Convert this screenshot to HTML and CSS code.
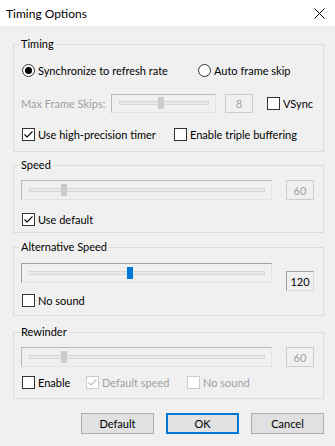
FILE: index.html
```html
<!DOCTYPE html>
<html lang="en">
<head>
  <meta charset="UTF-8" />
  <title>Timing Options</title>
  <link rel="stylesheet" href="styles.css">
</head>
<body>
  <div class="window">
    <div class="titlebar">
      <span class="title">Timing Options</span>
      <svg class="close" width="11" height="11" viewBox="0 0 11 11"><path d="M0.5 0.5L10.5 10.5M10.5 0.5L0.5 10.5" stroke="#000" stroke-width="1"/></svg>
    </div>

    <div class="content">
      <fieldset class="group group-timing">
        <legend>Timing</legend>
        <div class="row row-check">
          <label class="opt opt-sync"><span class="radio checked"></span>Synchronize to refresh rate</label>
          <label class="opt"><span class="radio"></span>Auto frame skip</label>
        </div>
        <div class="row row-skips">
          <span class="skip-label muted">Max Frame Skips:</span>
          <div class="slider slider-skips disabled"><span class="track"></span><span class="thumb" style="left: 46px"></span></div>
          <span class="num num-skips disabled">8</span>
          <label class="opt opt-vsync"><span class="check"></span>VSync</label>
        </div>
        <div class="row row-check row-timer">
          <label class="opt opt-timer"><span class="check checked"><svg viewBox="0 0 11 11"><path d="M1.5 5.5L4 8L9.5 2.5" /></svg></span>Use high-precision timer</label>
          <label class="opt"><span class="check"></span>Enable triple buffering</label>
        </div>
      </fieldset>

      <fieldset class="group group-speed">
        <legend>Speed</legend>
        <div class="row row-slider">
          <div class="slider disabled"><span class="track"></span><span class="thumb" style="left: 39px"></span></div>
          <span class="num disabled">60</span>
        </div>
        <div class="row row-check row-default">
          <label class="opt"><span class="check checked"><svg viewBox="0 0 11 11"><path d="M1.5 5.5L4 8L9.5 2.5" /></svg></span>Use default</label>
        </div>
      </fieldset>

      <fieldset class="group group-alt">
        <legend>Alternative Speed</legend>
        <div class="row row-slider row-alt">
          <div class="slider"><span class="track"></span><span class="thumb" style="left: 105px"></span></div>
          <span class="num">120</span>
        </div>
        <div class="row row-check row-nosound">
          <label class="opt"><span class="check"></span>No sound</label>
        </div>
      </fieldset>

      <fieldset class="group group-rewind">
        <legend>Rewinder</legend>
        <div class="row row-slider">
          <div class="slider disabled"><span class="track"></span><span class="thumb" style="left: 39px"></span></div>
          <span class="num disabled">60</span>
        </div>
        <div class="row row-check row-rewind">
          <label class="opt opt-enable"><span class="check"></span>Enable</label>
          <label class="opt opt-defspeed muted"><span class="check disabled checked"><svg viewBox="0 0 11 11"><path d="M1.5 5.5L4 8L9.5 2.5" /></svg></span>Default speed</label>
          <label class="opt muted"><span class="check disabled"></span>No sound</label>
        </div>
      </fieldset>

      <div class="buttons">
        <button>Default</button>
        <button class="primary">OK</button>
        <button>Cancel</button>
      </div>
    </div>
  </div>
</body>
</html>
```

FILE: styles.css
```css
* {
  box-sizing: border-box;
}

body {
  margin: 0;
  font-family: Lato, 'Noto Sans', sans-serif;
  font-size: 11px;
  color: #000;
  background: #f0f0f0;
}

.window {
  width: 335px;
  height: 446px;
  background: #f0f0f0;
  overflow: hidden;
}

.titlebar {
  height: 26px;
  background: #fff;
  display: flex;
  align-items: center;
  justify-content: space-between;
  padding: 0 10px 0 6px;
}

.title {
  font-size: 12px;
}

.content {
  padding: 10px 11px 0 13px;
}

.group {
  margin: 0;
  min-width: 0;
  border: 1px solid #dcdcdc;
  padding: 0 8px 0 7px;
}

.group legend {
  padding: 0 2px;
  margin-left: -2px;
  height: 16px;
  line-height: 16px;
}

.group-timing { padding-bottom: 9px; }
.group-speed { margin-top: 5px; padding-bottom: 5px; }
.group-alt { margin-top: 6px; padding-bottom: 7px; }
.group-rewind { margin-top: 8px; padding-bottom: 8px; }

.row {
  display: flex;
  align-items: center;
}

.row-check {
  height: 16px;
  margin-top: 10px;
}

.row-timer { margin-top: 13px; }
.row-default { margin-top: 11px; }
.row-nosound { margin-top: 1px; }
.row-rewind { margin-top: 7px; }

.row-skips {
  height: 20px;
  margin-top: 15px;
}

.row-slider {
  height: 20px;
  margin-top: 7px;
}

.row-alt {
  height: 28px;
  margin-top: 8px;
  align-items: flex-start;
}

.row-alt .num {
  align-self: flex-end;
}

.opt {
  display: flex;
  align-items: center;
  white-space: nowrap;
}

.row-check .opt:first-child {
  margin-left: 1px;
}

.opt-sync { width: 176px; }
.opt-timer { width: 152px; }
.opt-enable { width: 64px; }
.opt-defspeed { width: 101px; }

.radio, .check {
  display: inline-block;
  width: 13px;
  height: 13px;
  flex: none;
  margin-right: 3px;
  background: #fff;
  border: 1px solid #333;
}

.radio {
  border-radius: 50%;
  position: relative;
}

.radio.checked::after {
  content: "";
  position: absolute;
  left: 2px;
  top: 2px;
  width: 7px;
  height: 7px;
  border-radius: 50%;
  background: #000;
}

.check svg {
  display: block;
  width: 11px;
  height: 11px;
  fill: none;
  stroke: #000;
  stroke-width: 1.1;
}

.check.disabled {
  border-color: #ccc;
}

.check.disabled svg {
  stroke: #bcbcbc;
}

.muted {
  color: #a0a0a0;
}

.skip-label {
  width: 90px;
  white-space: nowrap;
}

.slider {
  position: relative;
  width: 251px;
  height: 20px;
  border: 1px solid;
  border-color: #a0a0a0 #e3e3e3 #e3e3e3 #a0a0a0;
}

.slider.disabled {
  border-color: #b9b9b9 #e3e3e3 #e3e3e3 #b9b9b9;
}

.slider-skips {
  width: 105px;
  height: 19px;
}

.track {
  position: absolute;
  left: 7px;
  right: 6px;
  top: 50%;
  height: 4px;
  margin-top: -2px;
  background: #e7eaea;
  border: 1px solid #d6d6d6;
}

.thumb {
  position: absolute;
  top: 50%;
  width: 6px;
  height: 12px;
  margin-top: -6px;
  background: #0078d7;
}

.slider.disabled .thumb {
  background: #cccccc;
}

.num {
  width: 28px;
  height: 20px;
  margin-left: 14px;
  display: flex;
  align-items: center;
  justify-content: center;
  border: 1px solid;
  border-color: #a0a0a0 #dcdcdc #dcdcdc #a0a0a0;
}

.num.disabled {
  color: #a0a0a0;
  border-color: #cccccc;
}

.num-skips {
  height: 19px;
  margin-left: 9px;
}

.opt-vsync {
  margin-left: 14px;
}

.buttons {
  display: flex;
  justify-content: flex-end;
  gap: 12px;
  margin-top: 14px;
}

.buttons button {
  width: 73px;
  height: 21px;
  padding: 0;
  font-family: inherit;
  font-size: 11px;
  color: #000;
  background: #e1e1e1;
  border: 1px solid #adadad;
}

.buttons .primary {
  border: 2px solid #0078d7;
}
```
